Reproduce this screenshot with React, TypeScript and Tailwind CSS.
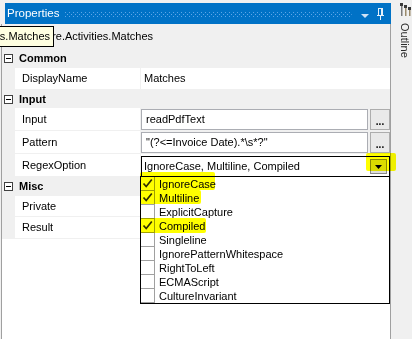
import React from "react";

const Minus = () => (
  <div className="w-[9px] h-[9px] border border-[#404040] bg-white flex items-center justify-center">
    <div className="w-[5px] h-px bg-black" />
  </div>
);

function Cat({ label, cls }: { label: string; cls: string }) {
  return (
    <div className={"flex items-center bg-[#f0f0f0] shrink-0 " + cls}>
      <div className="w-[13px] pl-[2px] flex">
        <Minus />
      </div>
      <span className="ml-[4px] font-bold">{label}</span>
    </div>
  );
}

function Prop({
  name,
  cls,
  valueCls,
  children,
}: {
  name: string;
  cls: string;
  valueCls: string;
  children?: React.ReactNode;
}) {
  return (
    <div className={"flex shrink-0 border-b border-[#f0f0f0] " + cls}>
      <div className="w-[13px] bg-[#f0f0f0]" />
      <div className="w-[125px] flex items-center pl-[7px] bg-white">{name}</div>
      <div className="w-px bg-[#f0f0f0]" />
      <div className={"relative flex-1 " + valueCls}>{children}</div>
    </div>
  );
}

function Editor({ text }: { text: string }) {
  return (
    <div className="flex pt-[1px]">
      <div className="w-[227px] h-[21px] border border-[#abadb3] bg-white flex items-center pl-[4px] whitespace-nowrap">
        {text}
      </div>
      <div className="ml-[2px] w-[20px] h-[21px] border border-[#adadad] bg-[#e9e9e9] flex items-center justify-center font-bold text-[10px] pt-[5px]">
        ...
      </div>
    </div>
  );
}

const Check = () => (
  <svg width="11" height="11" viewBox="0 0 11 11">
    <path d="M1.5 5.5 L4.2 8.5 L9.8 1.5" stroke="#2e2e2e" strokeWidth="1.7" fill="none" />
  </svg>
);

const items: [string, boolean][] = [
  ["IgnoreCase", true],
  ["Multiline", true],
  ["ExplicitCapture", false],
  ["Compiled", true],
  ["Singleline", false],
  ["IgnorePatternWhitespace", false],
  ["RightToLeft", false],
  ["ECMAScript", false],
  ["CultureInvariant", false],
];

export default function App() {
  return (
    <div className="relative w-[412px] h-[339px] overflow-hidden bg-[#f0f0f0] flex font-['Liberation_Sans',Arial,sans-serif] text-[11px] text-black leading-none">
      {/* left panel */}
      <div className="w-[391px] flex flex-col">
        {/* title bar */}
        <div className="mt-[3px] ml-[5px] w-[386px] h-[21px] bg-[#0072c6] flex items-center shrink-0">
          <span className="pl-[2px] text-white text-[11.5px]">Properties</span>
          <div className="ml-[6px] flex-1 h-[5px] mt-[1px]">
            <svg width="100%" height="5">
              <defs>
                <pattern id="dp" width="4" height="4" patternUnits="userSpaceOnUse">
                  <rect x="0" y="0" width="1" height="1" fill="#5ea6e8" />
                  <rect x="2" y="2" width="1" height="1" fill="#5ea6e8" />
                </pattern>
              </defs>
              <rect width="100%" height="5" fill="url(#dp)" />
            </svg>
          </div>
          <svg className="ml-[9px] mt-[4px]" width="8" height="4" viewBox="0 0 8 4">
            <polygon points="0,0 8,0 4,4" fill="#cfe3f6" />
          </svg>
          <svg className="ml-[8px] mr-[7px]" width="7" height="12" viewBox="0 0 7 12">
            <rect x="1.5" y="0.5" width="4" height="7" stroke="#e6f0fa" fill="none" />
            <rect x="4" y="1" width="1.5" height="6.5" fill="#e6f0fa" />
            <rect x="0" y="7" width="7" height="1" fill="#e6f0fa" />
            <rect x="3" y="8" width="1" height="4" fill="#e6f0fa" />
          </svg>
        </div>

        {/* body */}
        <div className="ml-[1px] w-[390px] flex-1 bg-white border-l border-r border-[#a0a0a0] flex flex-col">
          <div className="h-[24px] bg-[#f0f0f0] flex items-center whitespace-nowrap shrink-0">
            UiPath.Core.Activities.Matches
          </div>
          <Cat label="Common" cls="h-[20px]" />
          <Prop name="DisplayName" cls="h-[22px]" valueCls="bg-white flex items-center pl-[3px]">
            Matches
          </Prop>
          <Cat label="Input" cls="h-[18px]" />
          <Prop name="Input" cls="h-[23px]" valueCls="bg-[#f0f0f0]">
            <Editor text="readPdfText" />
          </Prop>
          <Prop name="Pattern" cls="h-[23px]" valueCls="bg-[#f0f0f0]">
            <Editor text={'"(?<=Invoice Date).*\\s*?"'} />
          </Prop>
          <Prop name="RegexOption" cls="h-[23px]" valueCls="bg-white pt-[2px]">
            <div className="h-[20px] border border-b-0 border-black bg-white flex items-center">
              <span className="pl-[2px] whitespace-nowrap">IgnoreCase, Multiline, Compiled</span>
              <div className="ml-auto mr-[2px] w-[17px] h-[15px] bg-[#dcdcdc] border border-[#8a8a8a] flex items-center justify-center">
                <svg width="7" height="4" viewBox="0 0 7 4">
                  <polygon points="0,0 7,0 3.5,4" fill="#000" />
                </svg>
              </div>
            </div>
            <div className="absolute top-[22px] left-[-1px] w-[250px] border border-black bg-white z-10">
              {items.map(([t, c]) => (
                <div key={t} className="flex h-[14px] items-center">
                  <div className="w-[14px] h-[14px] border-r border-b border-[#a0a0a0] flex items-center justify-center">
                    {c && <Check />}
                  </div>
                  <span className="pl-[4px] whitespace-nowrap">{t}</span>
                </div>
              ))}
            </div>
          </Prop>
          <Cat label="Misc" cls="h-[19px]" />
          <Prop name="Private" cls="h-[21px]" valueCls="bg-white" />
          <Prop name="Result" cls="h-[22px]" valueCls="bg-white" />
        </div>
      </div>

      {/* right strip */}
      <div className="flex-1 flex flex-col items-start pl-[9px] pt-[3px]">
        <svg width="11" height="13" viewBox="0 0 11 13">
          <rect x="0" y="0" width="3" height="3" fill="#3a3a3a" />
          <rect x="1" y="3" width="1.5" height="10" fill="#7a7a7a" />
          <rect x="4" y="2" width="3" height="3" fill="#3a3a3a" />
          <rect x="5" y="5" width="1.5" height="8" fill="#9a8a6a" />
          <rect x="8" y="4" width="3" height="3" fill="#3a3a3a" />
          <rect x="9" y="7" width="1.5" height="6" fill="#9a8a6a" />
        </svg>
        <span className="mt-[7px] -ml-[1px] [writing-mode:vertical-rl] text-[11px] text-[#2a2a2a]">Outline</span>
      </div>

      {/* tooltip */}
      <div className="absolute left-0 top-[26px] w-[54px] h-[21px] bg-[#ffffe1] border border-l-0 border-black flex items-center justify-end pr-[3px] overflow-hidden whitespace-nowrap z-20">
        <span className="shrink-0">UiPath.Core.Activities.Matches</span>
      </div>

      {/* highlighter marks */}
      <div className="absolute left-[140px] top-[172px] w-[75px] h-[18px] bg-[#ffff00] mix-blend-multiply rounded-[2px] z-30" />
      <div className="absolute left-[140px] top-[190px] w-[61px] h-[14px] bg-[#ffff00] mix-blend-multiply rounded-[2px] z-30" />
      <div className="absolute left-[140px] top-[218px] w-[66px] h-[15px] bg-[#ffff00] mix-blend-multiply rounded-[2px] z-30" />
      <div className="absolute left-[366px] top-[153px] w-[30px] h-[18px] bg-[#ffff00] mix-blend-multiply rounded-[2px] z-30" />
    </div>
  );
}
